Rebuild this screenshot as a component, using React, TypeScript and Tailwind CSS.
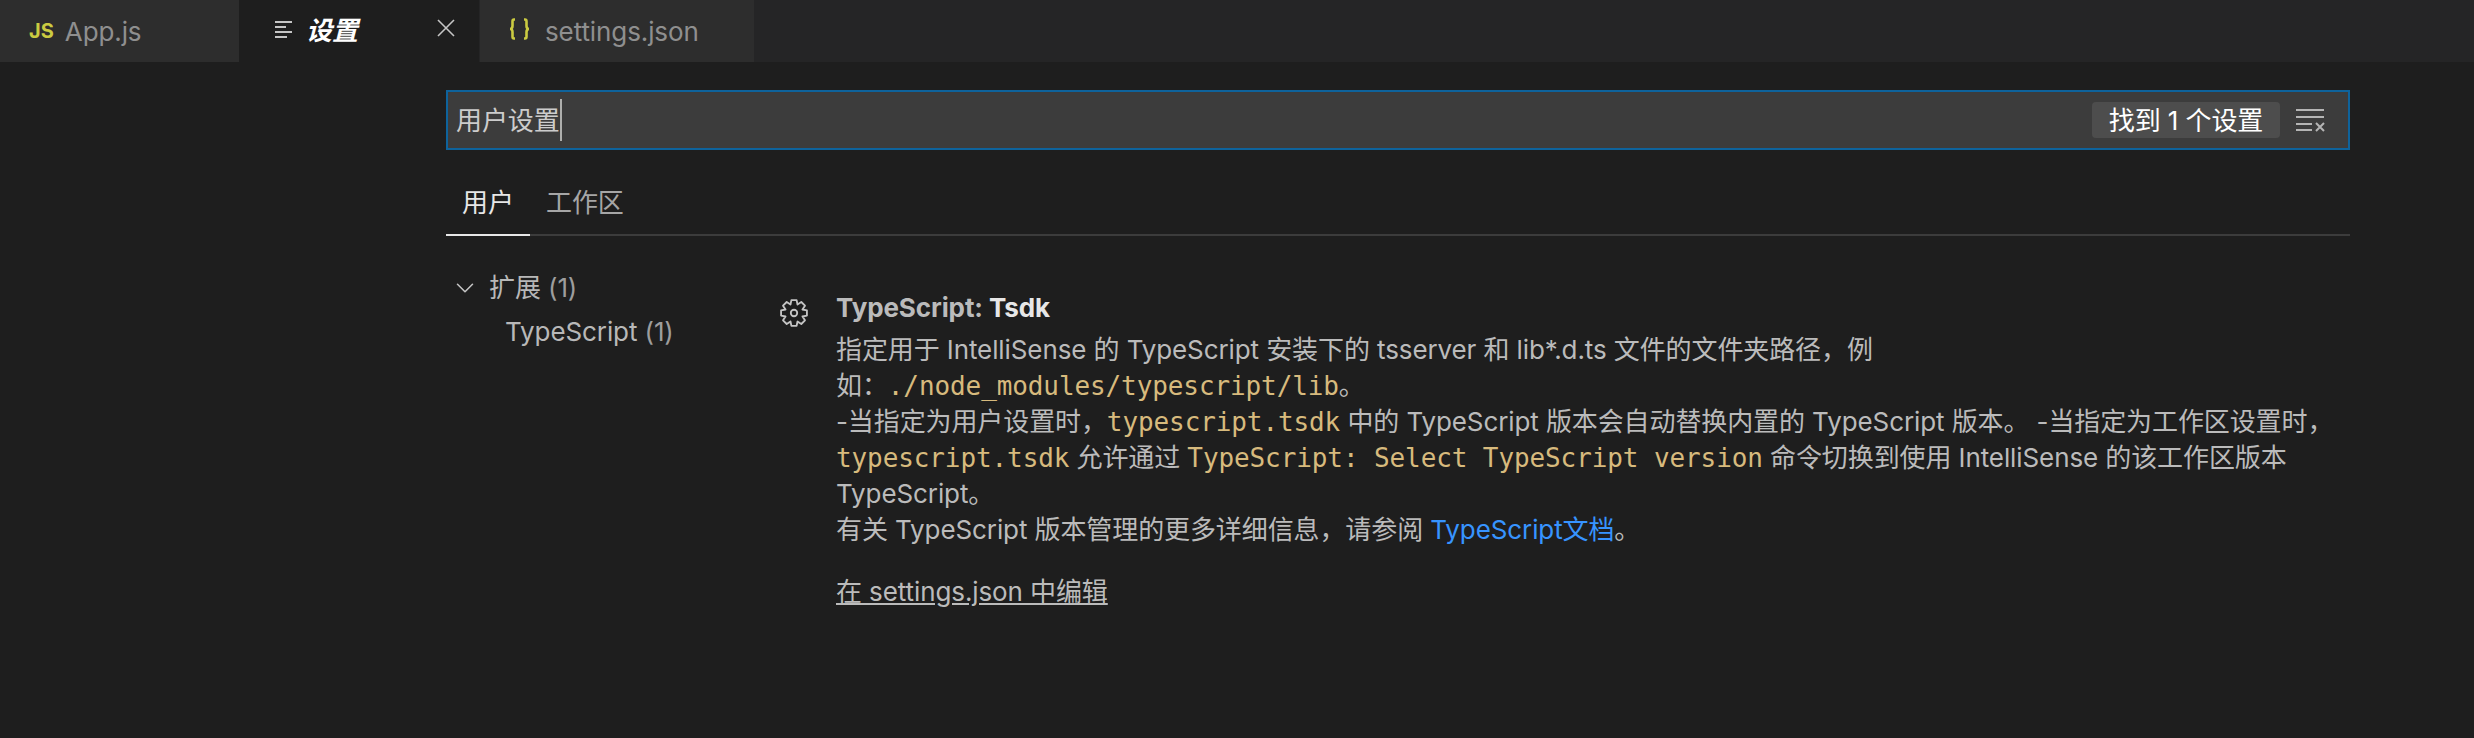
import { ChevronDown } from 'lucide-react';

const sans = "font-['Inter','Noto_Sans_CJK_SC',sans-serif]";

function Code({ children }: { children: string }) {
  return <span className="font-['DejaVu_Sans_Mono','Noto_Sans_CJK_SC',monospace] text-[#d7ba7d]">{children}</span>;
}

function PreviewIcon() {
  return (
    <svg width="17" height="18" viewBox="0 0 17 18" fill="none" stroke="#c5c5c5" strokeWidth="2">
      <path d="M0 2h17M0 7h11M0 12h17M0 17h12" />
    </svg>
  );
}

function CloseIcon() {
  return (
    <svg width="18" height="18" viewBox="0 0 18 18" fill="none" stroke="#c5c5c5" strokeWidth="1.6">
      <path d="M1 1l16 16M17 1L1 17" />
    </svg>
  );
}

function BracesIcon() {
  return (
    <svg width="21" height="22" viewBox="0 0 21 22" fill="none" stroke="#cbcb41" strokeWidth="2.6">
      <path d="M6 1.5H5Q3.5 1.5 3.5 3.5V8Q3.5 11 1 11Q3.5 11 3.5 14V18.5Q3.5 20.5 5 20.5H6" />
      <path d="M15 1.5H16Q17.5 1.5 17.5 3.5V8Q17.5 11 20 11Q17.5 11 17.5 14V18.5Q17.5 20.5 16 20.5H15" />
    </svg>
  );
}

function ClearIcon() {
  return (
    <svg width="30" height="24" viewBox="0 0 30 24" fill="none" stroke="#b5b5b5" strokeWidth="2">
      <path d="M0 2h28M0 9h28M0 16h16M0 22h16" />
      <path d="M20 15l8 8M28 15l-8 8" />
    </svg>
  );
}

function GearIcon() {
  return (
    <svg width="28" height="28" viewBox="-1 -1 26 26" fill="none" stroke="#c5c5c5" strokeWidth="1.7" strokeLinejoin="round">
      <path d="M19.85 8.75l4.15.83v4.84l-4.15.83 2.35 3.52-3.43 3.43-3.52-2.35-.83 4.15H9.58l-.83-4.15-3.52 2.35-3.43-3.43 2.35-3.52L0 14.42V9.58l4.15-.83L1.8 5.23 5.23 1.8l3.52 2.35L9.58 0h4.84l.83 4.15 3.52-2.35 3.43 3.43-2.35 3.52z" />
      <circle cx="12" cy="12" r="3" />
    </svg>
  );
}

export default function App() {
  return (
    <div className={`w-full h-[738px] bg-[#1e1e1e] text-[#cccccc] overflow-hidden tracking-[-0.1px] ${sans}`}>
      <div className="flex h-[62px] bg-[#252526]">
        <div className="w-[239px] bg-[#2d2d2d] flex items-center pl-[29px] gap-[11px]">
          <span className="text-[#cbcb41] text-[20px] font-bold tracking-[0px]">JS</span>
          <span className="text-[26px] text-[#8f8f8f]">App.js</span>
        </div>
        <div className="w-[240px] bg-[#1e1e1e] flex items-center pl-[36px]">
          <span className="-translate-y-[2px]">
            <PreviewIcon />
          </span>
          <span className="ml-[14px] text-[26px] italic font-bold text-white -translate-y-px">设置</span>
          <span className="ml-[79px] -translate-y-[3px]">
            <CloseIcon />
          </span>
        </div>
        <div className="ml-px w-[274px] bg-[#2d2d2d] flex items-center pl-[29px] gap-[15px]">
          <span className="-translate-y-[2px]">
            <BracesIcon />
          </span>
          <span className="text-[26px] text-[#8f8f8f]">settings.json</span>
        </div>
      </div>

      <div className="ml-[446px] w-[1904px]">
        <div className="mt-[28px] h-[60px] bg-[#3c3c3c] border-2 border-[#0e639c] flex items-center pl-[8px] pr-[22px]">
          <span className="text-[26px] text-[#cccccc] border-r-2 border-[#aeafad] leading-[40px] pt-[2px]">用户设置</span>
          <span className="ml-auto h-[36px] w-[188px] bg-[#4d4d4d] rounded-[4px] flex items-center justify-center text-[26px] text-white">
            找到 1 个设置
          </span>
          <span className="ml-[16px]">
            <ClearIcon />
          </span>
        </div>

        <div className="mt-[30px] h-[56px] flex border-b-2 border-[#3c3c3c] text-[26px]">
          <div className="w-[84px] h-[56px] border-b-2 border-[#e7e7e7] text-center text-[#e7e7e7] leading-[46px]">用户</div>
          <div className="ml-[16px] text-[#a6a6a6] leading-[46px]">工作区</div>
        </div>

        <div className="flex mt-[30px]">
          <div className="w-[334px] shrink-0 text-[26px] leading-[44px] text-[#b8b8b8]">
            <div className="flex items-center pl-[4px]">
              <ChevronDown size={30} strokeWidth={1.25} className="text-[#c5c5c5]" />
              <span className="ml-[9px]">扩展 <span className="text-[#9d9d9d]">(1)</span></span>
            </div>
            <div className="pl-[59px]">TypeScript <span className="text-[#9d9d9d]">(1)</span></div>
          </div>

          <div className="flex">
            <div className="mt-[33px] shrink-0">
              <GearIcon />
            </div>
            <div className="ml-[28px] w-[1514px] mt-[24px] text-[26px] leading-[36px] text-[#bbbbbb]">
              <div className="font-bold mb-[6px]">
                TypeScript: <span className="text-[#e7e7e7]">Tsdk</span>
              </div>
              <div>指定用于 IntelliSense 的 TypeScript 安装下的 tsserver 和 lib*.d.ts 文件的文件夹路径，例</div>
              <div>如：<Code>./node_modules/typescript/lib</Code>。</div>
              <div>
                -当指定为用户设置时，<Code>typescript.tsdk</Code> 中的 TypeScript 版本会自动替换内置的 TypeScript 版本。 -当指定为工作区设置时，
              </div>
              <div>
                <Code>typescript.tsdk</Code> 允许通过 <Code>TypeScript: Select TypeScript version</Code> 命令切换到使用 IntelliSense 的该工作区版本
              </div>
              <div>TypeScript。</div>
              <div>
                有关 TypeScript 版本管理的更多详细信息，请参阅 <span className="text-[#3794ff]">TypeScript文档</span>。
              </div>
              <div className="mt-[26px] underline">在 settings.json 中编辑</div>
            </div>
          </div>
        </div>
      </div>
    </div>
  );
}
